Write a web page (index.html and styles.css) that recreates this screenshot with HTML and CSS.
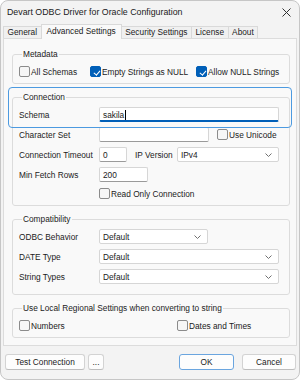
FILE: index.html
```html
<!DOCTYPE html>
<html lang="en">
<head>
    <meta charset="UTF-8">
    <title>Devart ODBC Driver for Oracle Configuration</title>
    <link rel="stylesheet" href="styles.css">
</head>
<body>
    <div class="window">
        <div class="titlebar">
            <span class="title">Devart ODBC Driver for Oracle Configuration</span>
            <svg class="close" width="9" height="9" viewBox="0 0 9 9"><path d="M0.5 0.5L8.5 8.5M8.5 0.5L0.5 8.5" stroke="#303030" stroke-width="1"/></svg>
        </div>

        <div class="tabs">
            <div class="tab">General</div>
            <div class="tab active">Advanced Settings</div>
            <div class="tab">Security Settings</div>
            <div class="tab">License</div>
            <div class="tab">About</div>
        </div>

        <div class="panel">
            <div class="focus-ring"></div>

            <fieldset class="group">
                <legend>Metadata</legend>
                <div class="line">
                    <label class="check w71"><span class="box"></span>All Schemas</label>
                    <label class="check w106"><span class="box on"></span>Empty Strings as NULL</label>
                    <label class="check"><span class="box on"></span>Allow NULL Strings</label>
                </div>
            </fieldset>

            <fieldset class="group">
                <legend>Connection</legend>
                <div class="row">
                    <span class="lbl">Schema</span>
                    <div class="input focused w180">sakila<span class="caret"></span></div>
                </div>
                <div class="row">
                    <span class="lbl">Character Set</span>
                    <div class="input w110"></div>
                    <label class="check unicode"><span class="box"></span>Use Unicode</label>
                </div>
                <div class="row">
                    <span class="lbl">Connection Timeout</span>
                    <div class="input w28">0</div>
                    <span class="lbl-ip">IP Version</span>
                    <div class="input select w102">IPv4<svg class="chev" width="7" height="4" viewBox="0 0 7 4"><path d="M0.5 0.5L3.5 3.5L6.5 0.5" fill="none" stroke="#707070"/></svg></div>
                </div>
                <div class="row">
                    <span class="lbl">Min Fetch Rows</span>
                    <div class="input w49">200</div>
                </div>
                <div class="line indent">
                    <label class="check"><span class="box"></span>Read Only Connection</label>
                </div>
            </fieldset>

            <fieldset class="group">
                <legend>Compatibility</legend>
                <div class="row">
                    <span class="lbl">ODBC Behavior</span>
                    <div class="input select w109">Default<svg class="chev" width="7" height="4" viewBox="0 0 7 4"><path d="M0.5 0.5L3.5 3.5L6.5 0.5" fill="none" stroke="#707070"/></svg></div>
                </div>
                <div class="row">
                    <span class="lbl">DATE Type</span>
                    <div class="input select w180">Default<svg class="chev" width="7" height="4" viewBox="0 0 7 4"><path d="M0.5 0.5L3.5 3.5L6.5 0.5" fill="none" stroke="#707070"/></svg></div>
                </div>
                <div class="row">
                    <span class="lbl">String Types</span>
                    <div class="input select w180">Default<svg class="chev" width="7" height="4" viewBox="0 0 7 4"><path d="M0.5 0.5L3.5 3.5L6.5 0.5" fill="none" stroke="#707070"/></svg></div>
                </div>
            </fieldset>

            <fieldset class="group">
                <legend>Use Local Regional Settings when converting to string</legend>
                <div class="line">
                    <label class="check w158"><span class="box"></span>Numbers</label>
                    <label class="check"><span class="box"></span>Dates and Times</label>
                </div>
            </fieldset>
        </div>

        <div class="buttons">
            <button class="btn w80">Test Connection</button>
            <button class="btn w16">...</button>
            <span class="spacer"></span>
            <button class="btn default w55">OK</button>
            <button class="btn w54">Cancel</button>
        </div>
    </div>
</body>
</html>
```

FILE: styles.css
```css
* { box-sizing: border-box; }
body { margin: 0; background: #ffffff; font-family: "Liberation Sans", Arial, sans-serif; font-size: 8.3px; color: #1b1b1b; }

.window { width: 300px; height: 380px; border: 1px solid #c6c6c6; border-radius: 8px; background: #f3f3f3; overflow: hidden; }
.titlebar { height: 22px; display: flex; align-items: center; padding: 0 7px 0 6px; }
.title { flex: 1; font-size: 8.8px; color: #1a1a1a; }
.close { margin-right: 1px; }

.tabs { display: flex; align-items: flex-end; height: 15px; padding-left: 2px; }
.tab { height: 12px; line-height: 11px; padding: 0 3.5px; border: 1px solid #d9d9d9; border-bottom: none; margin-right: -1px; background: #f0f0f0; }
.tab.active { height: 15px; line-height: 13px; padding: 0 5px; margin: 0 -1px 0 0; background: #f9f9f9; position: relative; z-index: 1; margin-bottom: -1px; }

.panel { position: relative; height: 308px; margin: 0 2px; border: 1px solid #dcdcdc; background: #f9f9f9; padding-top: 10px; }
.focus-ring { position: absolute; left: 4px; top: 48px; width: 284px; height: 41px; border: 1px solid #4c9ae0; border-radius: 4px; pointer-events: none; }

.group { margin: 0 6px 8px 8px; padding: 0 6px 5px 6px; border: 1px solid #dcdcdc; border-radius: 3px; min-width: 0; }
.group legend { padding: 0 1px; margin-left: 3px; line-height: 10px; }

.line { display: flex; align-items: center; height: 13px; margin-top: 6px; }
.line.indent { padding-left: 80px; margin-top: 0; }
.row { display: flex; align-items: center; height: 15px; margin-bottom: 5px; }
.group .row:first-of-type { margin-top: 5px; }

.lbl { width: 80px; }
.lbl-ip { margin-left: 8px; width: 42px; }

.check { display: flex; align-items: center; }
.box { width: 11px; height: 11px; border: 1px solid #8b8b8b; border-radius: 2px; background: #f6f6f6; margin-right: 1px; position: relative; }
.box.on { background: #005fb8; border-color: #005fb8; }
.box.on::after { content: ""; position: absolute; left: 3.5px; top: 1.5px; width: 2.5px; height: 5px; border: solid #ffffff; border-width: 0 1px 1px 0; transform: rotate(40deg); }
.unicode { margin-left: 8px; }

.input { height: 15px; border: 1px solid #d6d6d6; border-bottom-color: #9a9a9a; border-radius: 2px; background: #ffffff; padding-left: 3px; display: flex; align-items: center; }
.input.focused { border-bottom: 2px solid #005fb8; padding-top: 1px; }
.caret { width: 1px; height: 10px; background: #000000; margin-left: 1px; }
.select { justify-content: space-between; padding-right: 6px; border-bottom-color: #d6d6d6; }
.chev { flex: none; }

.w16 { width: 16px; }
.w28 { width: 28px; }
.w49 { width: 49px; }
.w54 { width: 54px; }
.w55 { width: 55px; }
.w71 { width: 71px; }
.w80 { width: 80px; }
.w102 { width: 102px; }
.w106 { width: 106px; }
.w109 { width: 109px; }
.w110 { width: 110px; }
.w158 { width: 158px; }
.w180 { width: 180px; }

.buttons { display: flex; align-items: center; gap: 3px; padding: 8px 3px 0 4px; }
.spacer { flex: 1; }
.btn { height: 16px; padding: 0; font-family: inherit; font-size: 8.3px; color: #1b1b1b; background: #fdfdfd; border: 1px solid #d3d3d3; border-bottom-color: #bdbdbd; border-radius: 3px; }
.btn.default { border-color: #6aa5df; margin-right: 5px; }
```
